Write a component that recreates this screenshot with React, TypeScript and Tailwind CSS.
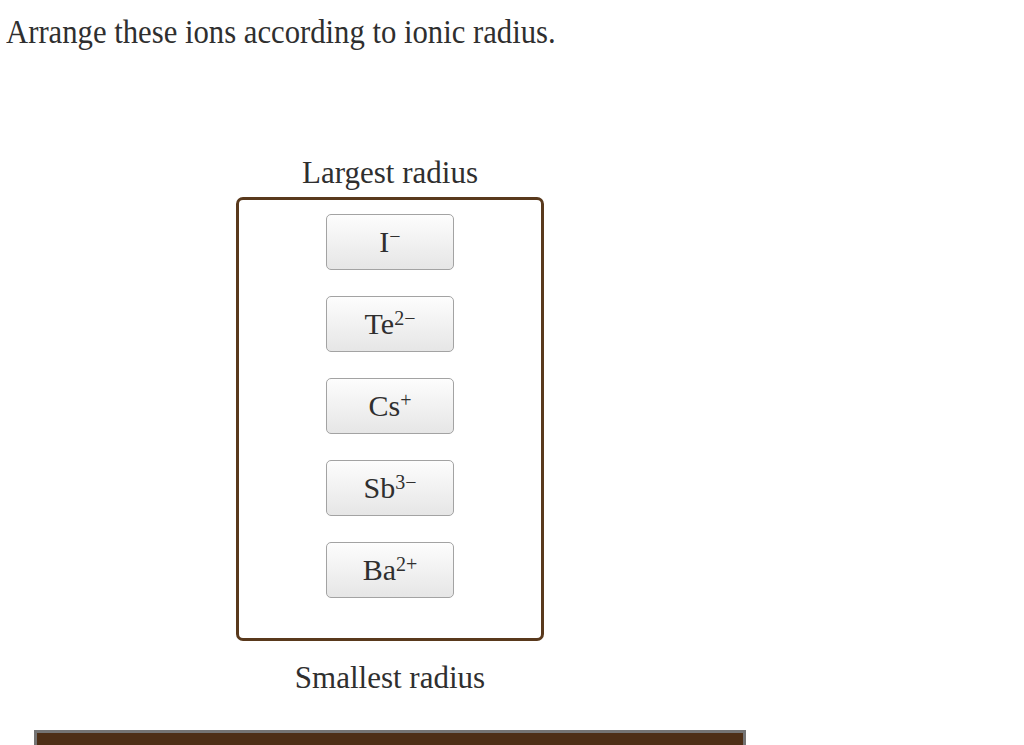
import React from "react";

interface Ion {
  symbol: string;
  charge: string;
}

const ions: Ion[] = [
  { symbol: "I", charge: "−" },
  { symbol: "Te", charge: "2−" },
  { symbol: "Cs", charge: "+" },
  { symbol: "Sb", charge: "3−" },
  { symbol: "Ba", charge: "2+" },
];

const IonTile: React.FC<{ ion: Ion }> = ({ ion }) => (
  <div className="w-[128px] h-[56px] flex items-center justify-center rounded-[5px] border border-[#a3a3a3] bg-gradient-to-b from-[#fdfdfd] to-[#e6e6e6] text-[#2f2f2f]">
    <span className="text-[30px] leading-none">
      {ion.symbol}
      <sup className="text-[20px] -top-[9px]">{ion.charge}</sup>
    </span>
  </div>
);

export default function App() {
  return (
    <div className="w-[1024px] h-[745px] bg-white overflow-hidden font-['Liberation_Serif',serif] text-[#2f2f2f]">
      <h1 className="pl-[6px] pt-[14px] h-[50px] text-[33px] leading-[36px]">
        <span className="inline-block origin-left scale-x-[0.93] whitespace-nowrap">
          Arrange these ions according to ionic radius.
        </span>
      </h1>

      <div className="ml-[236px] w-[308px] mt-[105px] flex flex-col items-center">
        <div className="text-[31px] leading-[36px]">Largest radius</div>
        <div className="mt-[6px] w-full h-[444px] rounded-[7px] border-[3px] border-[#59391c] pt-[14px] flex flex-col items-center gap-[26px]">
          {ions.map((ion) => (
            <IonTile key={ion.symbol} ion={ion} />
          ))}
        </div>
        <div className="mt-[19px] text-[31px] leading-[36px]">Smallest radius</div>
      </div>

      <div className="ml-[34px] mt-[34px] w-[712px] h-[40px] border-t-[3px] border-x-[3px] border-[#747474] bg-[#4d2f17]" />
    </div>
  );
}
